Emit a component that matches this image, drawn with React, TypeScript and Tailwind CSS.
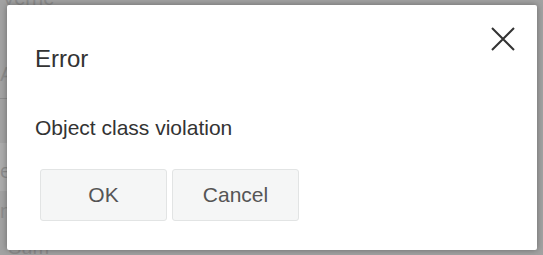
export default function App() {
  return (
    <div className="relative h-[255px] w-[543px] overflow-hidden bg-[#a2a2a2] font-['Liberation_Sans',Arial,sans-serif]">
      {/* Page behind the overlay */}
      <div className="flex flex-col text-[20px] leading-none text-[#8c8c8c]">
        <span className="-mt-[12px] pl-[2px]">Verne</span>
        <span className="mt-[56px] pl-[0px]">A</span>
        <div className="mt-[14px] h-px w-[10px] bg-[#8c8c8c]" />
        <div className="mt-[44px] h-[48px] w-[7px] bg-[#acacac]" />
        <span className="-mt-[30px]">e</span>
        <span className="mt-[20px]">n</span>
        <span className="mt-[16px] pl-[8px]">Sum</span>
      </div>

      {/* Dialog */}
      <div className="absolute left-[7px] top-[5px] h-[245px] w-[530px] rounded-[2px] bg-white pl-[28px] pt-[40px] shadow-[0_0_6px_rgba(0,0,0,0.35)]">
        <button className="absolute left-[484px] top-[22px] text-[#333]" aria-label="Close">
          <svg width="24" height="24" viewBox="0 0 24 24" fill="none" stroke="currentColor" strokeWidth={2}>
            <path d="M1 1L23 23M23 1L1 23" />
          </svg>
        </button>
        <h2 className="text-[24px] leading-[28px] text-[#333]">Error</h2>
        <p className="mt-[43px] text-[21px] leading-[24px] text-[#333]">Object class violation</p>
        <div className="ml-[5px] mt-[29px] flex gap-[5px]">
          <button className="flex h-[52px] w-[127px] items-center justify-center rounded-[3px] border border-[#e2e4e4] bg-[#f5f6f6] text-[21px] text-[#555]">
            OK
          </button>
          <button className="flex h-[52px] w-[127px] items-center justify-center rounded-[3px] border border-[#e2e4e4] bg-[#f5f6f6] text-[21px] text-[#555]">
            Cancel
          </button>
        </div>
      </div>
    </div>
  );
}
